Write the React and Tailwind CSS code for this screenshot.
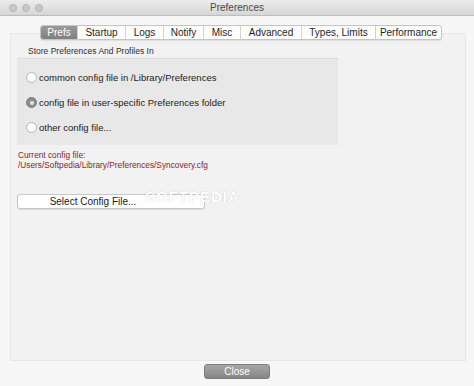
import React from 'react';

const tabs = [
    { label: 'Prefs', w: 36 },
    { label: 'Startup', w: 48 },
    { label: 'Logs', w: 38 },
    { label: 'Notify', w: 40 },
    { label: 'Misc', w: 37 },
    { label: 'Advanced', w: 61 },
    { label: 'Types, Limits', w: 74 },
    { label: 'Performance', w: 66 },
];

const options = [
    { label: 'common config file in /Library/Preferences', checked: false },
    { label: 'config file in user-specific Preferences folder', checked: true },
    { label: 'other config file...', checked: false },
];

const Radio = ({ checked }) => (
    <span
        className={`inline-flex items-center justify-center w-[11px] h-[11px] rounded-full border shrink-0 ${
            checked ? 'bg-[#8d8d8d] border-[#7a7a7a]' : 'bg-white border-[#b5b5b5]'
        }`}
    >
        {checked && <span className="w-[4px] h-[4px] rounded-full bg-[#e6e6e6]" />}
    </span>
);

const App = () => {
    return (
        <div
            className="w-[474px] h-[386px] bg-[#f7f7f7] flex flex-col overflow-hidden"
            style={{ fontFamily: '"Liberation Sans", Arial, sans-serif' }}
        >
            {/* title bar */}
            <div className="h-[16px] grid grid-cols-[1fr_auto_1fr] items-center bg-gradient-to-b from-[#ececec] to-[#d6d6d6] border-b border-[#bdbdbd]">
                <div className="flex items-center gap-[5px] pl-[9px]">
                    <span className="w-[8px] h-[8px] rounded-full bg-[#c9c9c9] border border-[#b4b4b4]" />
                    <span className="w-[8px] h-[8px] rounded-full bg-[#c9c9c9] border border-[#b4b4b4]" />
                    <span className="w-[8px] h-[8px] rounded-full bg-[#c9c9c9] border border-[#b4b4b4]" />
                </div>
                <div className="text-[10px] text-[#4a4a4a] leading-none">Preferences</div>
                <div />
            </div>

            {/* tabs */}
            <div className="relative z-10 flex pl-[40px] mt-[9px]">
                <div className="flex h-[15px] rounded-[3px] border border-[#c4c4c4] bg-white overflow-hidden shadow-[0_1px_1px_rgba(0,0,0,0.08)]">
                    {tabs.map((t, i) => (
                        <div
                            key={t.label}
                            style={{ width: t.w }}
                            className={`flex items-center justify-center text-[10px] leading-none ${
                                i === 0
                                    ? 'bg-gradient-to-b from-[#9a9a9a] to-[#7f7f7f] text-white'
                                    : 'text-[#1e1e1e] border-l border-[#d2d2d2]'
                            }`}
                        >
                            {t.label}
                        </div>
                    ))}
                </div>
            </div>

            {/* panel */}
            <div className="relative ml-[10px] w-[456px] h-[328px] -mt-[7px] bg-[#f2f2f2] border border-[#e6e6e6] flex flex-col">
                <div className="pl-[17px] pt-[12px] text-[8.5px] leading-[11px] text-[#2e2e2e]">
                    Store Preferences And Profiles In
                </div>
                <div className="ml-[6px] mt-[1px] w-[321px] h-[87px] bg-[#e8e8e8] border-t border-[#dcdcdc] flex flex-col pt-[12px] pl-[9px] gap-[12px]">
                    {options.map((o) => (
                        <div key={o.label} className="flex items-center gap-[2px] h-[13px]">
                            <Radio checked={o.checked} />
                            <span className="text-[9.5px] text-[#1a1a1a] leading-none">{o.label}</span>
                        </div>
                    ))}
                </div>
                <div className="pl-[7px] pt-[6px] text-[8.3px] leading-[9.5px] text-[#8a1c2c]">
                    <div>Current config file:</div>
                    <div>/Users/Softpedia/Library/Preferences/Syncovery.cfg</div>
                </div>
                <button className="ml-[6px] mt-[24px] w-[188px] h-[15px] bg-white border border-[#c8c8c8] rounded-[3px] text-[10px] leading-none text-[#1a1a1a] shadow-[0_1px_1px_rgba(0,0,0,0.1)] pr-[36px]">
                    Select Config File...
                </button>
                <div className="absolute left-[134px] top-[155px] text-[15px] tracking-[1px] font-bold text-white leading-none select-none [text-shadow:0_0_1px_rgba(0,0,0,0.25)]">
                    SOFTPEDIA
                </div>
            </div>

            {/* close */}
            <div className="flex justify-center mt-[3px]">
                <button className="w-[66px] h-[15px] rounded-[3px] bg-gradient-to-b from-[#a6a6a6] to-[#868686] border border-[#7c7c7c] text-[10px] leading-none text-white">
                    Close
                </button>
            </div>
        </div>
    );
};

export default App;
